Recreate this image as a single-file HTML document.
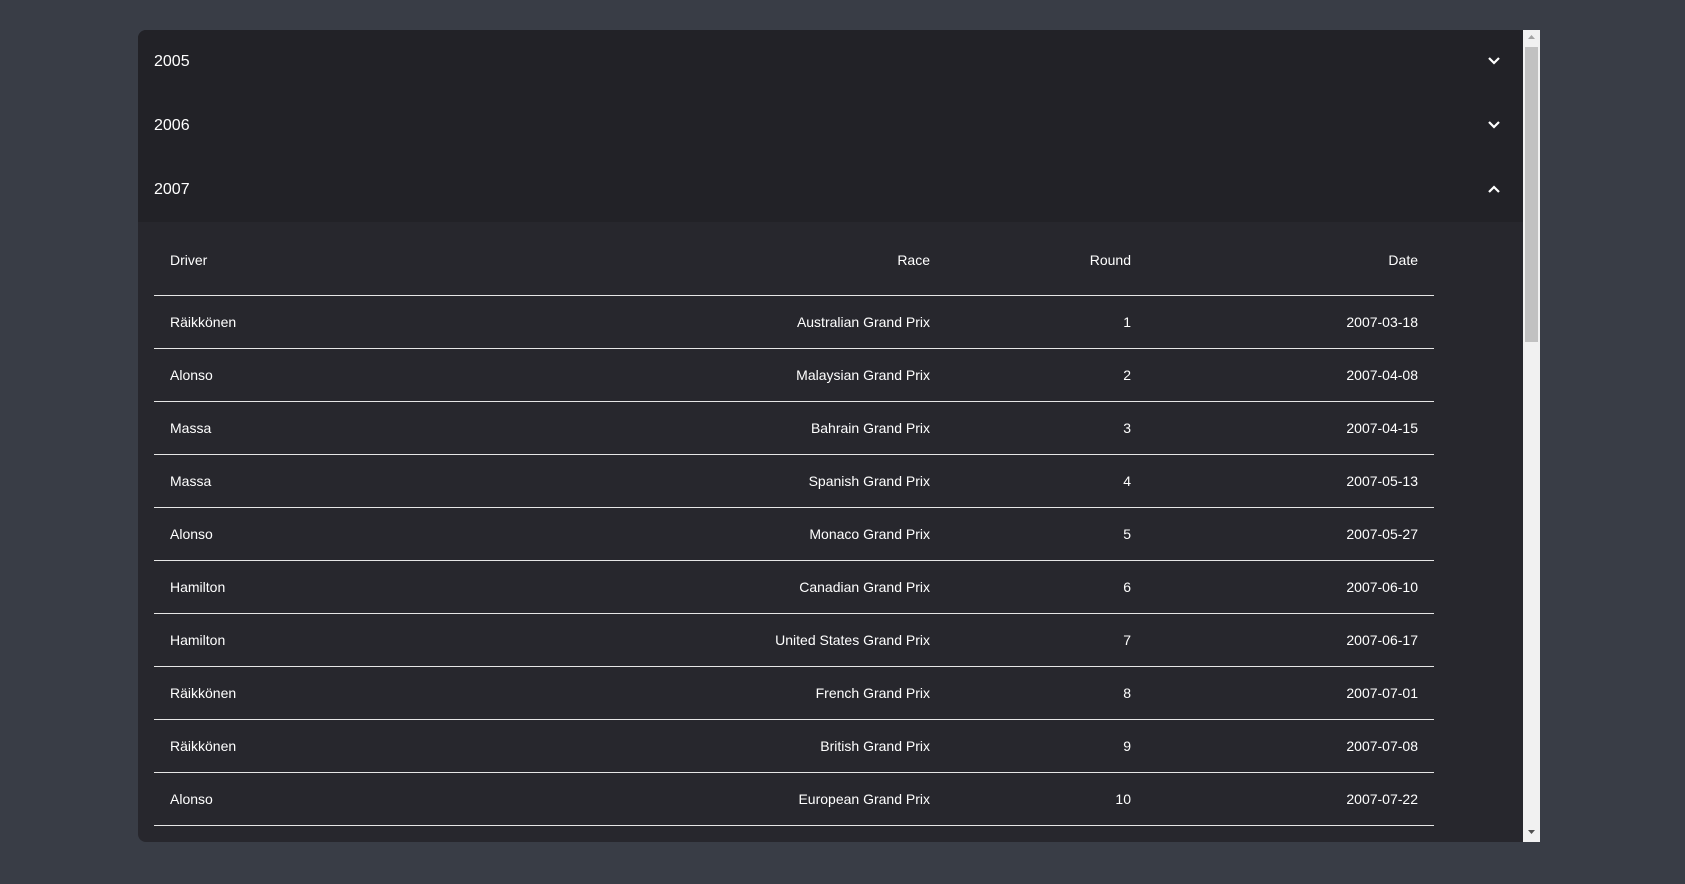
<!DOCTYPE html>
<html><head><meta charset="utf-8"><style>
html,body{margin:0;padding:0;background:#393d46;width:1685px;height:884px;overflow:hidden;font-family:"Liberation Sans",Arial,sans-serif;color:#fff}
.box{position:absolute;left:138px;top:30px;width:1402px;height:812px;border-radius:8px 0 0 8px;overflow:hidden;background:#27272d}
.content{position:absolute;left:0;top:0;width:1385px;height:812px}
.hd{height:64px;background:#222227;position:relative;font-size:16px}
.hd span{position:absolute;left:16px;top:23px}
.hd svg{position:absolute;left:1349px;top:26px}
table{position:absolute;left:16px;top:192px;border-collapse:collapse;font-size:14px;table-layout:fixed;width:1280px}
td{padding:0 16px;border-bottom:1.5px solid #e6e6e6;height:52px}
tr.h td{height:71px;padding-top:2px}
td.r{text-align:right}
.sb{position:absolute;left:1385px;top:0;width:17px;height:812px;background:#f1f1f1}
.th{position:absolute;left:2px;top:17px;width:13px;height:295px;background:#c1c1c1}
</style></head><body>
<div class="box"><div class="content">
<div class="hd"><span>2005</span><svg width="14" height="10" viewBox="0 0 14 10"><path d="M2 2l5 5 5-5" fill="none" stroke="#fff" stroke-width="2.2"/></svg></div>
<div class="hd"><span>2006</span><svg width="14" height="10" viewBox="0 0 14 10"><path d="M2 2l5 5 5-5" fill="none" stroke="#fff" stroke-width="2.2"/></svg></div>
<div class="hd"><span>2007</span><svg width="14" height="10" viewBox="0 0 14 10"><path d="M2 8l5-5 5 5" fill="none" stroke="#fff" stroke-width="2.2"/></svg></div>
<table>
<colgroup><col style="width:400px"><col style="width:392px"><col style="width:201px"><col style="width:287px"></colgroup>
<tr class="h"><td>Driver</td><td class="r">Race</td><td class="r">Round</td><td class="r">Date</td></tr>
<tr><td>Räikkönen</td><td class="r">Australian Grand Prix</td><td class="r">1</td><td class="r">2007-03-18</td></tr>
<tr><td>Alonso</td><td class="r">Malaysian Grand Prix</td><td class="r">2</td><td class="r">2007-04-08</td></tr>
<tr><td>Massa</td><td class="r">Bahrain Grand Prix</td><td class="r">3</td><td class="r">2007-04-15</td></tr>
<tr><td>Massa</td><td class="r">Spanish Grand Prix</td><td class="r">4</td><td class="r">2007-05-13</td></tr>
<tr><td>Alonso</td><td class="r">Monaco Grand Prix</td><td class="r">5</td><td class="r">2007-05-27</td></tr>
<tr><td>Hamilton</td><td class="r">Canadian Grand Prix</td><td class="r">6</td><td class="r">2007-06-10</td></tr>
<tr><td>Hamilton</td><td class="r">United States Grand Prix</td><td class="r">7</td><td class="r">2007-06-17</td></tr>
<tr><td>Räikkönen</td><td class="r">French Grand Prix</td><td class="r">8</td><td class="r">2007-07-01</td></tr>
<tr><td>Räikkönen</td><td class="r">British Grand Prix</td><td class="r">9</td><td class="r">2007-07-08</td></tr>
<tr><td>Alonso</td><td class="r">European Grand Prix</td><td class="r">10</td><td class="r">2007-07-22</td></tr>
<tr><td>Massa</td><td class="r">Hungarian Grand Prix</td><td class="r">11</td><td class="r">2007-08-05</td></tr>
</table>
</div>
<div class="sb"><div class="th"></div>
<svg style="position:absolute;left:5px;top:5px" width="7" height="5"><path d="M0 4L3.5 0 7 4z" fill="#a3a3a3"/></svg>
<svg style="position:absolute;left:5px;top:800px" width="7" height="5"><path d="M0 0L3.5 4 7 0z" fill="#505050"/></svg>
</div></div>
</body></html>
